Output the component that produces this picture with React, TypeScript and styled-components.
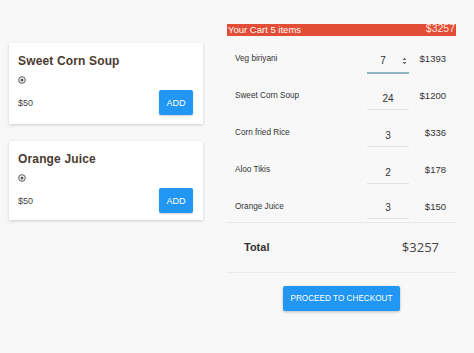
import React, { FC } from "react";
import styled, { createGlobalStyle } from "styled-components";

const GlobalStyle = createGlobalStyle`
    body {
        margin: 0;
        background: #f8f8f8;
        font-family: "Liberation Sans", Arial, sans-serif;
    }
`;

const Page = styled.div`
    display: flex;
    width: 474px;
    height: 353px;
    background: #f8f8f8;
`;

const Menu = styled.div`
    display: flex;
    flex-direction: column;
    gap: 17px;
    width: 194px;
    padding: 43px 0 0 9px;
`;

const Card = styled.div<{ $h: number }>`
    display: flex;
    flex-direction: column;
    height: ${(p) => p.$h}px;
    box-sizing: border-box;
    padding: 11px 10px 0 9px;
    background: #fff;
    box-shadow: 0 1px 3px rgba(0, 0, 0, 0.18);
`;

const Title = styled.div`
    font-size: 12px;
    font-weight: bold;
    color: #4a3a30;
    letter-spacing: 0.15px;
`;

const Radio = styled.svg`
    margin: 8px 0 0 0;
    width: 8px;
    height: 8px;
`;

const CardFoot = styled.div`
    display: flex;
    justify-content: space-between;
    align-items: center;
    margin-top: 6px;
`;

const Price = styled.span`
    font-size: 9px;
    color: #444;
`;

const AddButton = styled.button`
    width: 34px;
    height: 25px;
    padding: 0;
    border: none;
    border-radius: 2px;
    background: #2196f3;
    color: #fff;
    font-family: "Liberation Sans", Arial, sans-serif;
    font-size: 9px;
    box-shadow: 0 1px 2px rgba(0, 0, 0, 0.2);
`;

const Cart = styled.div`
    display: flex;
    flex-direction: column;
    width: 229px;
    margin-left: 24px;
    padding-top: 24px;
`;

const CartBar = styled.div`
    display: flex;
    justify-content: space-between;
    align-items: flex-start;
    height: 12px;
    background: #e34c35;
    color: #fff;
    font-size: 9.5px;
    line-height: 12px;
    padding-left: 1px;
`;

const BarTotal = styled.span`
    font-size: 10.5px;
    line-height: 8px;
    margin-right: 1px;
    color: #ffe3dc;
`;

const Items = styled.div`
    display: flex;
    flex-direction: column;
    padding-top: 4px;
    border-bottom: 1px solid #e8e8e8;
`;

const Row = styled.div`
    display: grid;
    grid-template-columns: 1fr 42px 37px;
    align-items: center;
    height: 37px;
    padding: 0 10px 0 8px;

    &:last-child {
        height: 34px;
        align-items: start;
    }
`;

const ItemName = styled.span`
    font-size: 8.2px;
    color: #333;

    ${Row}:last-child & {
        margin-top: 14px;
    }
`;

const Qty = styled.div<{ $focus?: boolean }>`
    position: relative;
    display: flex;
    justify-content: center;
    align-items: center;
    height: 22px;
    margin-top: 6px;
    padding-right: ${(p) => (p.$focus ? "10px" : "0")};
    font-size: 10px;
    color: #333;
    border-bottom: ${(p) => (p.$focus ? "2px solid #8fb6c4" : "1px solid #e2e2e2")};

    ${Row}:last-child & {
        margin-top: 8px;
    }
`;

const Spin = styled.svg`
    position: absolute;
    right: 2px;
    top: 7px;
    width: 5px;
    height: 8px;
`;

const Amount = styled.span`
    font-size: 9.5px;
    color: #333;
    text-align: right;

    ${Row}:last-child & {
        margin-top: 13px;
    }
`;

const TotalRow = styled.div`
    display: flex;
    justify-content: space-between;
    align-items: center;
    height: 50px;
    box-sizing: border-box;
    padding: 0 17px 2px 17px;
    border-bottom: 1px solid #ececec;
`;

const TotalLabel = styled.span`
    font-size: 11px;
    font-weight: bold;
    color: #333;
`;

const TotalValue = styled.span`
    font-family: "Open Sans", "Liberation Sans", sans-serif;
    font-size: 13px;
    color: #444;
`;

const Checkout = styled.button`
    align-self: center;
    margin-top: 13px;
    width: 117px;
    height: 25px;
    padding: 0;
    white-space: nowrap;
    border: none;
    border-radius: 2px;
    background: #2196f3;
    color: #fff;
    font-family: "Liberation Sans", Arial, sans-serif;
    font-size: 8.2px;
    box-shadow: 0 1px 3px rgba(0, 0, 0, 0.25);
`;

const foods = [
    { name: "Sweet Corn Soup", h: 81 },
    { name: "Orange Juice", h: 79 },
];

const cart = [
    { name: "Veg biriyani", qty: 7, amount: 1393 },
    { name: "Sweet Corn Soup", qty: 24, amount: 1200 },
    { name: "Corn fried Rice", qty: 3, amount: 336 },
    { name: "Aloo Tikis", qty: 2, amount: 178 },
    { name: "Orange Juice", qty: 3, amount: 150 },
];

const RadioIcon: FC = () => (
    <Radio viewBox="0 0 8 8">
        <circle cx="4" cy="4" r="3.3" fill="none" stroke="#555" strokeWidth="1" />
        <circle cx="4" cy="4" r="1.5" fill="#555" />
    </Radio>
);

export default function App() {
    return (
        <Page>
            <GlobalStyle />
            <Menu>
                {foods.map((f) => (
                    <Card key={f.name} $h={f.h}>
                        <Title>{f.name}</Title>
                        <RadioIcon />
                        <CardFoot>
                            <Price>$50</Price>
                            <AddButton>ADD</AddButton>
                        </CardFoot>
                    </Card>
                ))}
            </Menu>
            <Cart>
                <CartBar>
                    <span>Your Cart 5 items</span>
                    <BarTotal>$3257</BarTotal>
                </CartBar>
                <Items>
                    {cart.map((c, i) => (
                        <Row key={c.name}>
                            <ItemName>{c.name}</ItemName>
                            <Qty $focus={i === 0}>
                                {c.qty}
                                {i === 0 && (
                                    <Spin viewBox="0 0 5 8">
                                        <path d="M0.5 3 L2.5 0.8 L4.5 3 Z" fill="#666" />
                                        <path d="M0.5 5 L2.5 7.2 L4.5 5 Z" fill="#666" />
                                    </Spin>
                                )}
                            </Qty>
                            <Amount>${c.amount}</Amount>
                        </Row>
                    ))}
                </Items>
                <TotalRow>
                    <TotalLabel>Total</TotalLabel>
                    <TotalValue>$3257</TotalValue>
                </TotalRow>
                <Checkout>PROCEED TO CHECKOUT</Checkout>
            </Cart>
        </Page>
    );
}
